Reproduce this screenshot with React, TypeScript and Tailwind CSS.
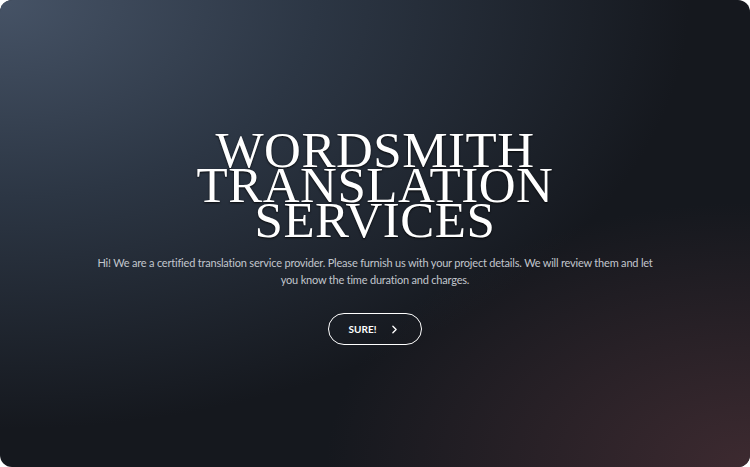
import { ChevronRight } from 'lucide-react';

export default function App() {
  return (
    <div className="w-[750px] h-[467px] bg-white">
      <div className="relative w-full h-full rounded-[12px] overflow-hidden bg-[#15181e]">
        <div className="absolute inset-0 bg-[radial-gradient(ellipse_at_0%_0%,#465366_0%,#2c3644_30%,rgba(21,24,30,0)_65%)]" />
        <div className="absolute inset-0 bg-[radial-gradient(ellipse_at_100%_100%,#3d2a30_0%,rgba(21,24,30,0)_40%)]" />
        <div className="relative flex flex-col items-center h-full pt-[133px]">
          <h1
            className="text-white text-center text-[51px] leading-[35px] tracking-[0.5px] [text-shadow:0_1px_2px_rgba(0,0,0,0.8)]"
            style={{ fontFamily: '"Liberation Serif", serif' }}
          >
            WORDSMITH
            <br />
            TRANSLATION
            <br />
            SERVICES
          </h1>
          <p
            className="mt-[16px] w-[570px] text-center text-[11px] leading-[17px] tracking-[-0.2px] text-[#c2c6cd]"
            style={{ fontFamily: 'Lato, sans-serif' }}
          >
            Hi! We are a certified translation service provider. Please furnish us with your project details. We will review them and let you know the time duration and charges.
          </p>
          <button
            className="mt-[25px] flex items-center gap-[12px] h-[32px] px-[20px] rounded-full border-[1.5px] border-white text-white text-[10px] font-bold"
            style={{ fontFamily: 'Lato, sans-serif' }}
          >
            SURE!
            <ChevronRight className="w-[13px] h-[13px]" strokeWidth={2.5} />
          </button>
        </div>
      </div>
    </div>
  );
}
